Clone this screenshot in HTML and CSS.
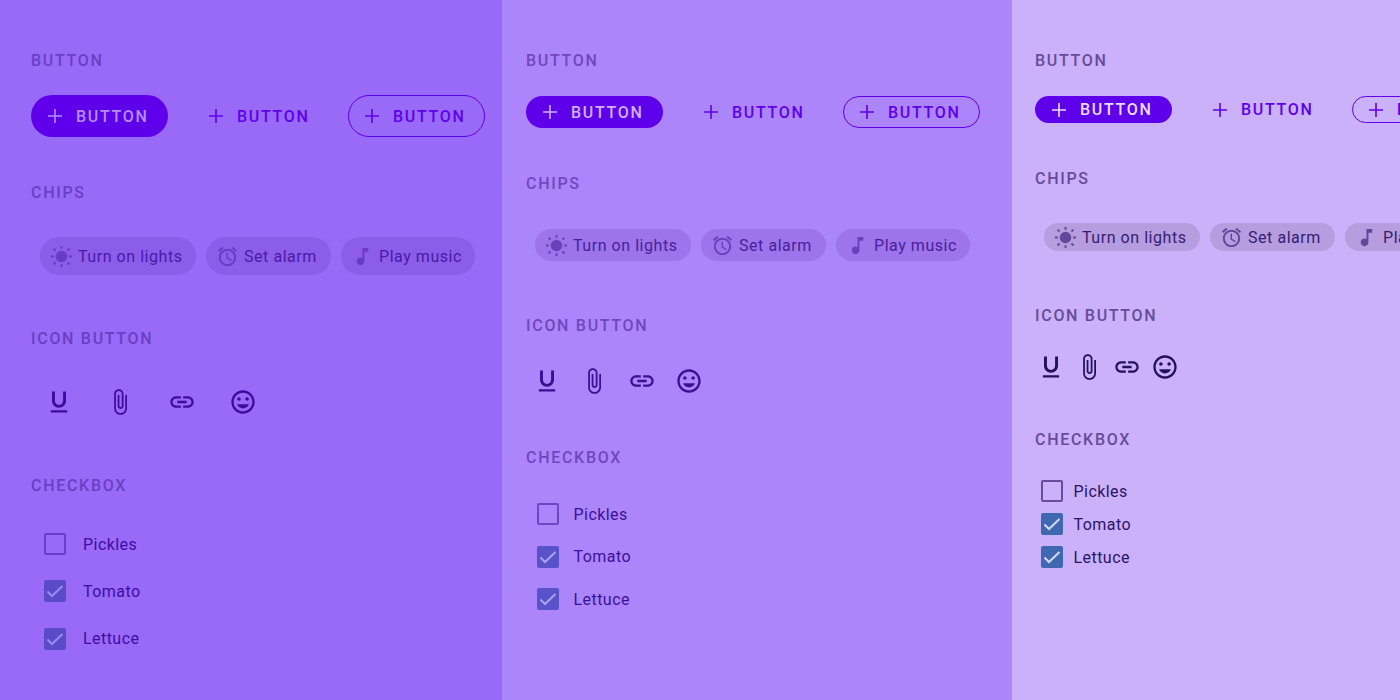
FILE: index.html
```html
<!DOCTYPE html>
<html lang="en">
<head>
  <meta charset="UTF-8" />
  <title>Density</title>
  <link rel="stylesheet" href="styles.css">
</head>
<body>

  <!-- Iconos compartidos -->
  <svg class="sprite" width="0" height="0" aria-hidden="true">
    <symbol id="i-plus" viewBox="0 0 14 14"><path d="M7 0v14M0 7h14" fill="none" stroke="currentColor" stroke-width="1.6"/></symbol>
    <symbol id="i-sun" viewBox="0 0 24 24"><circle cx="12" cy="12" r="6"/><path d="M11 1h2v3h-2zM11 20h2v3h-2zM1 11h3v2H1zM20 11h3v2h-3zM4.4 3l2.1 2.1L5.100 6.500 3 4.400zM18.900 17.500 21 19.600 19.600 21l-2.100-2.100zM19.600 3 21 4.400l-2.100 2.100-1.400-1.400zM5.100 17.500l1.400 1.400L4.400 21 3 19.600z"/></symbol>
    <symbol id="i-alarm" viewBox="0 0 24 24"><path d="M22 5.720l-4.600-3.860-1.290 1.530 4.600 3.860L22 5.720zM7.880 3.390L6.600 1.860 2 5.710l1.290 1.530 4.590-3.850zM12.500 8H11v6l4.750 2.850.75-1.230-4-2.370V8zM12 4c-4.970 0-9 4.030-9 9s4.030 9 9 9 9-4.030 9-9-4.030-9-9-9zm0 16c-3.870 0-7-3.130-7-7s3.130-7 7-7 7 3.130 7 7-3.130 7-7 7z"/></symbol>
    <symbol id="i-music" viewBox="0 0 24 24"><path d="M12 3v10.550c-.59-.34-1.270-.55-2-.55-2.210 0-4 1.790-4 4s1.790 4 4 4 4-1.790 4-4V7h4V3h-6z"/></symbol>
    <symbol id="i-underline" viewBox="0 0 24 24"><path d="M12 17c3.310 0 6-2.690 6-6V3h-2.500v8c0 1.930-1.570 3.500-3.500 3.500S8.500 12.930 8.500 11V3H6v8c0 3.310 2.690 6 6 6zm-7 2v2h14v-2H5z"/></symbol>
    <symbol id="i-clip" viewBox="0 0 24 24"><path d="M16.500 6v11.500c0 2.210-1.790 4-4 4s-4-1.790-4-4V5c0-1.380 1.120-2.500 2.500-2.500s2.500 1.120 2.500 2.500v10.500c0 .55-.45 1-1 1s-1-.45-1-1V6H10v9.500c0 1.380 1.120 2.500 2.500 2.500s2.500-1.120 2.500-2.500V5c0-2.210-1.790-4-4-4S7 2.790 7 5v12.500c0 3.040 2.460 5.500 5.500 5.500s5.500-2.460 5.500-5.500V6h-1.500z"/></symbol>
    <symbol id="i-link" viewBox="0 0 24 24"><path d="M3.900 12c0-1.710 1.390-3.100 3.100-3.100h4V7H7c-2.760 0-5 2.240-5 5s2.240 5 5 5h4v-1.900H7c-1.710 0-3.100-1.390-3.100-3.100zM8 13h8v-2H8v2zm9-6h-4v1.900h4c1.710 0 3.100 1.390 3.100 3.100s-1.390 3.100-3.100 3.100h-4V17h4c2.760 0 5-2.240 5-5s-2.240-5-5-5z"/></symbol>
    <symbol id="i-mood" viewBox="0 0 24 24"><path d="M11.990 2C6.470 2 2 6.480 2 12s4.470 10 9.990 10C17.520 22 22 17.520 22 12S17.520 2 11.990 2zM12 20c-4.420 0-8-3.580-8-8s3.580-8 8-8 8 3.580 8 8-3.580 8-8 8zm3.500-9c.83 0 1.500-.67 1.500-1.500S16.330 8 15.500 8 14 8.670 14 9.500s.67 1.500 1.500 1.500zm-7 0c.83 0 1.500-.67 1.500-1.500S9.330 8 8.500 8 7 8.670 7 9.500 7.670 11 8.500 11zm3.500 6.500c2.330 0 4.310-1.460 5.110-3.500H6.890c.8 2.040 2.780 3.500 5.110 3.500z"/></symbol>
    <symbol id="i-check" viewBox="0 0 22 22"><path d="M3.500 11.500l4.500 4.500L18.500 6" fill="none" stroke="currentColor" stroke-width="2"/></symbol>
  </svg>

  <main class="columns">

    <!-- Densidad por defecto -->
    <section class="col col-default">
      <h2 class="title">Button</h2>
      <div class="btn-row">
        <button class="btn btn-filled"><svg class="plus"><use href="#i-plus"/></svg>Button</button>
        <button class="btn btn-text"><svg class="plus"><use href="#i-plus"/></svg>Button</button>
        <button class="btn btn-outlined"><svg class="plus"><use href="#i-plus"/></svg>Button</button>
      </div>
      <h2 class="title">Chips</h2>
      <div class="chip-row">
        <span class="chip chip-lights"><svg class="chip-icon"><use href="#i-sun"/></svg>Turn on lights</span>
        <span class="chip chip-alarm"><svg class="chip-icon"><use href="#i-alarm"/></svg>Set alarm</span>
        <span class="chip chip-music"><svg class="chip-icon"><use href="#i-music"/></svg>Play music</span>
      </div>
      <h2 class="title">Icon button</h2>
      <div class="icon-row">
        <button class="icon-btn"><svg><use href="#i-underline"/></svg></button>
        <button class="icon-btn"><svg><use href="#i-clip"/></svg></button>
        <button class="icon-btn"><svg><use href="#i-link"/></svg></button>
        <button class="icon-btn"><svg><use href="#i-mood"/></svg></button>
      </div>
      <h2 class="title">Checkbox</h2>
      <ul class="check-list">
        <li class="check-item"><span class="box"></span>Pickles</li>
        <li class="check-item"><span class="box box-on"><svg><use href="#i-check"/></svg></span>Tomato</li>
        <li class="check-item"><span class="box box-on"><svg><use href="#i-check"/></svg></span>Lettuce</li>
      </ul>
    </section>

    <!-- Densidad media -->
    <section class="col col-comfortable">
      <h2 class="title">Button</h2>
      <div class="btn-row">
        <button class="btn btn-filled"><svg class="plus"><use href="#i-plus"/></svg>Button</button>
        <button class="btn btn-text"><svg class="plus"><use href="#i-plus"/></svg>Button</button>
        <button class="btn btn-outlined"><svg class="plus"><use href="#i-plus"/></svg>Button</button>
      </div>
      <h2 class="title">Chips</h2>
      <div class="chip-row">
        <span class="chip chip-lights"><svg class="chip-icon"><use href="#i-sun"/></svg>Turn on lights</span>
        <span class="chip chip-alarm"><svg class="chip-icon"><use href="#i-alarm"/></svg>Set alarm</span>
        <span class="chip chip-music"><svg class="chip-icon"><use href="#i-music"/></svg>Play music</span>
      </div>
      <h2 class="title">Icon button</h2>
      <div class="icon-row">
        <button class="icon-btn"><svg><use href="#i-underline"/></svg></button>
        <button class="icon-btn"><svg><use href="#i-clip"/></svg></button>
        <button class="icon-btn"><svg><use href="#i-link"/></svg></button>
        <button class="icon-btn"><svg><use href="#i-mood"/></svg></button>
      </div>
      <h2 class="title">Checkbox</h2>
      <ul class="check-list">
        <li class="check-item"><span class="box"></span>Pickles</li>
        <li class="check-item"><span class="box box-on"><svg><use href="#i-check"/></svg></span>Tomato</li>
        <li class="check-item"><span class="box box-on"><svg><use href="#i-check"/></svg></span>Lettuce</li>
      </ul>
    </section>

    <!-- Densidad compacta -->
    <section class="col col-compact">
      <h2 class="title">Button</h2>
      <div class="btn-row">
        <button class="btn btn-filled"><svg class="plus"><use href="#i-plus"/></svg>Button</button>
        <button class="btn btn-text"><svg class="plus"><use href="#i-plus"/></svg>Button</button>
        <button class="btn btn-outlined"><svg class="plus"><use href="#i-plus"/></svg>Button</button>
      </div>
      <h2 class="title">Chips</h2>
      <div class="chip-row">
        <span class="chip chip-lights"><svg class="chip-icon"><use href="#i-sun"/></svg>Turn on lights</span>
        <span class="chip chip-alarm"><svg class="chip-icon"><use href="#i-alarm"/></svg>Set alarm</span>
        <span class="chip chip-music"><svg class="chip-icon"><use href="#i-music"/></svg>Play music</span>
      </div>
      <h2 class="title">Icon button</h2>
      <div class="icon-row">
        <button class="icon-btn"><svg><use href="#i-underline"/></svg></button>
        <button class="icon-btn"><svg><use href="#i-clip"/></svg></button>
        <button class="icon-btn"><svg><use href="#i-link"/></svg></button>
        <button class="icon-btn"><svg><use href="#i-mood"/></svg></button>
      </div>
      <h2 class="title">Checkbox</h2>
      <ul class="check-list">
        <li class="check-item"><span class="box"></span>Pickles</li>
        <li class="check-item"><span class="box box-on"><svg><use href="#i-check"/></svg></span>Tomato</li>
        <li class="check-item"><span class="box box-on"><svg><use href="#i-check"/></svg></span>Lettuce</li>
      </ul>
    </section>

  </main>

</body>
</html>
```
FILE: styles.css
```css
body {
  margin: 0;
  height: 700px;
  overflow: hidden;
  font-family: Roboto, sans-serif;
}

.sprite {
  position: absolute;
}

.columns {
  display: grid;
  grid-template-columns: 502px 510px 388px;
  height: 700px;
}

.col {
  overflow: hidden;
  padding: 49px 0 0 var(--pad);
  background: var(--bg);
  white-space: nowrap;
}

/* Densidades y colores de cada columna */
.col-default {
  --pad: 31px;
  --bg: #9969f8;
  --title: #6b3fc4;
  --on-primary: #b48eff;
  --primary: #5f00ea;
  --btn-h: 42px;
  --chip-h: 38px;
  --chip-bg: #8c5de8;
  --chip-text: #4a1aa8;
  --chip-icon: #6a3bc6;
  --icon: #3f0b9f;
  --icon-cell: 61.3px;
  --icon-h: 48px;
  --icon-left: -2.500px;
  --check-h: 47.3px;
  --check-gap: 17px;
  --check-left: 13px;
  --check-text: #3f0ca6;
  --box-line: #6a3ec8;
  --box-on: #5a4cc8;
  --tick: #9c8af4;
  --gap-buttons: 22px;
  --gap-chips: 32px;
  --gap-after-buttons: 44px;
  --gap-after-chips: 52px;
  --gap-icons: 27px;
  --gap-after-icons: 48px;
  --gap-checks: 22.500px;
}

.col-comfortable {
  --pad: 24px;
  --bg: #ad85fb;
  --title: #7047c0;
  --on-primary: #cdb2ff;
  --primary: #5f00ea;
  --btn-h: 32px;
  --chip-h: 32px;
  --chip-bg: #9d74e9;
  --chip-text: #4a1e9e;
  --chip-icon: #6b41ba;
  --icon: #3a0f90;
  --icon-cell: 47.300px;
  --icon-h: 48px;
  --icon-left: -2.500px;
  --check-h: 42.500px;
  --check-gap: 15px;
  --check-left: 10.500px;
  --check-text: #3c109a;
  --box-line: #6f46c0;
  --box-on: #5a52c8;
  --tick: #aaa2f2;
  --gap-buttons: 23px;
  --gap-chips: 33px;
  --gap-after-buttons: 44px;
  --gap-after-chips: 53px;
  --gap-icons: 19px;
  --gap-after-icons: 41px;
  --gap-checks: 23px;
}

.col-compact {
  --pad: 23px;
  --bg: #cbb1fa;
  --title: #664b9c;
  --on-primary: #e9dcff;
  --primary: #5f00ea;
  --btn-h: 27px;
  --chip-h: 28px;
  --chip-bg: #b69ddf;
  --chip-text: #361c72;
  --chip-icon: #62479a;
  --icon: #24105e;
  --icon-cell: 38px;
  --icon-h: 38px;
  --icon-left: -3px;
  --check-h: 33px;
  --check-gap: 11px;
  --check-left: 5.500px;
  --check-text: #2c1268;
  --box-line: #6a4c9e;
  --box-on: #4068b0;
  --tick: #d0daf4;
  --gap-buttons: 23px;
  --gap-chips: 32px;
  --gap-after-buttons: 44px;
  --gap-after-chips: 53px;
  --gap-icons: 20px;
  --gap-after-icons: 42px;
  --gap-checks: 22.500px;
}

.title {
  margin: 0;
  font-size: 16px;
  font-weight: 500;
  line-height: 24px;
  letter-spacing: 1.700px;
  text-transform: uppercase;
  color: var(--title);
}

/* Botones */
.btn-row {
  display: flex;
  gap: 24px;
  margin: var(--gap-buttons) 0 var(--gap-after-buttons);
}

.btn {
  display: flex;
  align-items: center;
  box-sizing: border-box;
  width: 137px;
  height: var(--btn-h);
  padding: 0 0 0 17px;
  border: 0;
  border-radius: 21px;
  background: transparent;
  color: var(--primary);
  font-family: inherit;
  font-size: 16px;
  font-weight: 500;
  letter-spacing: 1.700px;
  text-transform: uppercase;
  flex: none;
}

.plus {
  width: 14px;
  height: 14px;
  margin-right: 14px;
  flex: none;
}

.btn-filled {
  background: var(--primary);
  color: var(--on-primary);
}

.btn-text {
  width: 132px;
}

.btn-outlined {
  border: 1.500px solid var(--primary);
  padding-left: 16px;
}

/* Chips */
.chip-row {
  display: flex;
  gap: 10px;
  margin: var(--gap-chips) 0 var(--gap-after-chips) 9px;
}

.chip {
  display: flex;
  align-items: center;
  height: var(--chip-h);
  border-radius: 19px;
  background: var(--chip-bg);
  color: var(--chip-text);
  font-size: 16px;
  letter-spacing: 0.550px;
  flex: none;
}

.chip-icon {
  width: 23px;
  height: 23px;
  margin: 0 5.500px 0 9.500px;
  fill: var(--chip-icon);
  flex: none;
}

.chip-lights {
  width: 156px;
}

.chip-alarm {
  width: 125px;
}

.chip-music {
  width: 134px;
}

/* Botones de icono */
.icon-row {
  display: flex;
  margin: var(--gap-icons) 0 var(--gap-after-icons) var(--icon-left);
}

.icon-btn {
  display: flex;
  align-items: center;
  justify-content: center;
  width: var(--icon-cell);
  height: var(--icon-h);
  padding: 0;
  border: 0;
  background: transparent;
  color: var(--icon);
  flex: none;
}

.icon-btn svg {
  width: 28px;
  height: 28px;
  fill: currentColor;
}

/* Checkbox */
.check-list {
  margin: var(--gap-checks) 0 0 var(--check-left);
  padding: 0;
  list-style: none;
}

.check-item {
  display: flex;
  align-items: center;
  gap: var(--check-gap);
  height: var(--check-h);
  color: var(--check-text);
  font-size: 16px;
  letter-spacing: 0.450px;
}

.box {
  box-sizing: border-box;
  width: 22px;
  height: 22px;
  border: 2px solid var(--box-line);
  border-radius: 2px;
  flex: none;
}

.box-on {
  border: 0;
  background: var(--box-on);
  color: var(--tick);
}

.box-on svg {
  display: block;
  width: 22px;
  height: 22px;
}
```
